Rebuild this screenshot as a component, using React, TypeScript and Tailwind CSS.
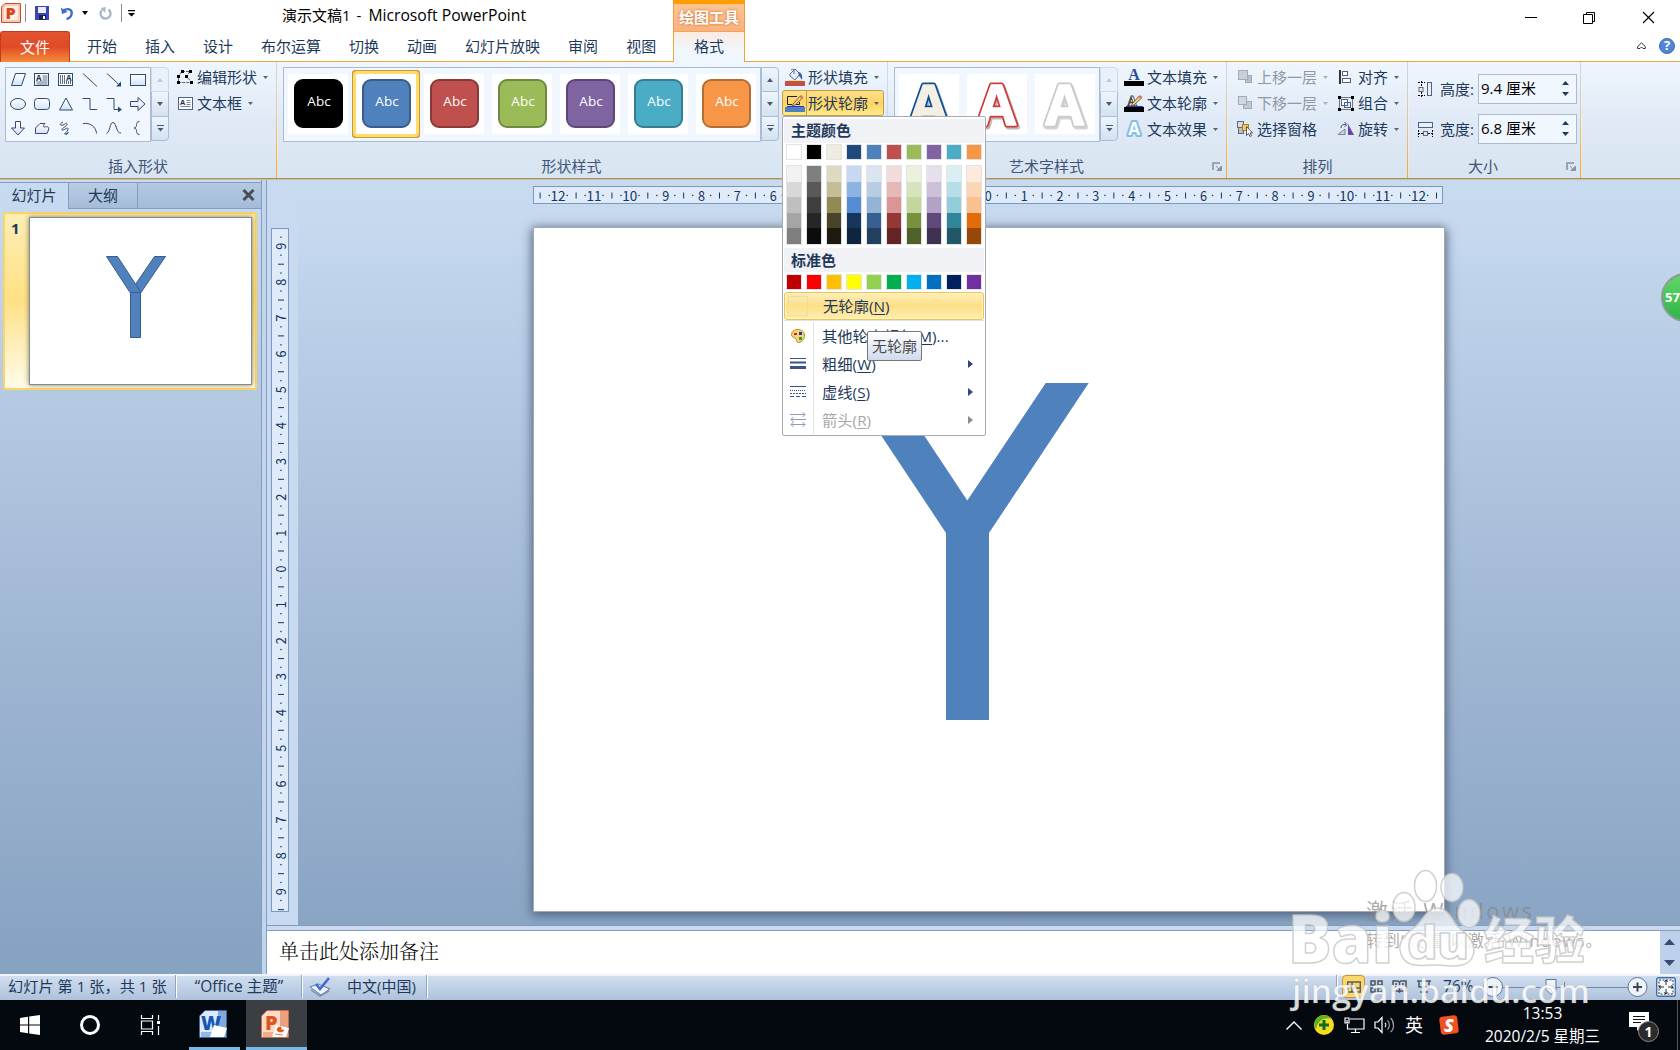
import React from 'react';

const tabs = ['开始', '插入', '设计', '布尔运算', '切换', '动画', '幻灯片放映', '审阅', '视图'];

const shapeStyles = [
  { fill: '#000000', line: '#000000' },
  { fill: '#4f81bd', line: '#385d8a', active: true },
  { fill: '#c0504d', line: '#8c3836' },
  { fill: '#9bbb59', line: '#71893f' },
  { fill: '#8064a2', line: '#5c4776' },
  { fill: '#4bacc6', line: '#357d91' },
  { fill: '#f79646', line: '#b66d31' },
];

const themeColors = ['#ffffff', '#000000', '#eeece1', '#1f497d', '#4f81bd', '#c0504d', '#9bbb59', '#8064a2', '#4bacc6', '#f79646'];

const themeShades = [
  ['#f2f2f2', '#d8d8d8', '#bfbfbf', '#a5a5a5', '#7f7f7f'],
  ['#7f7f7f', '#595959', '#3f3f3f', '#262626', '#0c0c0c'],
  ['#ddd9c3', '#c4bd97', '#938953', '#494429', '#1d1b10'],
  ['#c6d9f0', '#8db3e2', '#548dd4', '#17365d', '#0f243e'],
  ['#dbe5f1', '#b8cce4', '#95b3d7', '#366092', '#244061'],
  ['#f2dcdb', '#e5b9b7', '#d99694', '#953734', '#632423'],
  ['#ebf1dd', '#d7e3bc', '#c3d69b', '#76923c', '#4f6128'],
  ['#e5e0ec', '#ccc1d9', '#b2a2c7', '#5f497a', '#3f3151'],
  ['#dbeef3', '#b7dde8', '#92cddc', '#31859b', '#205867'],
  ['#fdeada', '#fbd5b5', '#fac08f', '#e36c09', '#974806'],
];

const standardColors = ['#c00000', '#ff0000', '#ffc000', '#ffff00', '#92d050', '#00b050', '#00b0f0', '#0070c0', '#002060', '#7030a0'];

const Caret = ({ faded = false }: { faded?: boolean }) => (
  <svg width="5" height="3" viewBox="0 0 5 3" className="shrink-0">
    <path d="M0 0h5L2.5 3z" fill={faded ? '#a9b3c0' : '#5a6472'} />
  </svg>
);

const GalleryScroll = ({ topFaded = false }: { topFaded?: boolean }) => (
  <div className="flex h-[74px] w-[18px] shrink-0 flex-col text-[#4f5b6b]">
    <div
      className={
        topFaded
          ? 'flex flex-1 items-center justify-center rounded-tr border border-[#cbdaeb] bg-[#e9f2fb] text-[#bccbdd]'
          : 'flex flex-1 items-center justify-center rounded-tr border border-[#aabbd3] bg-linear-to-b from-[#eef5fd] to-[#d9e6f4]'
      }
    >
      <svg width="6" height="4" viewBox="0 0 6 4"><path d="M0 4h6L3 0z" fill="currentColor" /></svg>
    </div>
    <div className="flex flex-1 items-center justify-center border-x border-[#aabbd3] bg-linear-to-b from-[#eef5fd] to-[#d3e1f1]">
      <svg width="6" height="4" viewBox="0 0 6 4"><path d="M0 0h6L3 4z" fill="currentColor" /></svg>
    </div>
    <div className="flex flex-1 items-center justify-center rounded-br border border-[#aabbd3] bg-linear-to-b from-[#eef5fd] to-[#d3e1f1]">
      <svg width="7" height="7" viewBox="0 0 7 7"><path d="M0 0h7v1H0zM.5 3h6L3.5 6.5z" fill="currentColor" /></svg>
    </div>
  </div>
);

const DialogLauncher = () => (
  <svg width="10" height="9" viewBox="0 0 10 9" fill="none" stroke="#8793a3">
    <path d="M1 8V1h7" strokeWidth="1.600" />
    <path d="M4 4l3 3" />
    <path d="M5 8.500h4.500V4z" fill="#8793a3" />
  </svg>
);

type GroupProps = { width: string; label: string; labelPad?: string; launcher?: boolean; line?: string; children: React.ReactNode };

const Group = ({ width, label, labelPad = '', launcher, line, children }: GroupProps) => (
  <div className={`flex shrink-0 flex-col ${width}`}>
    <div className="flex min-h-0 flex-1">
      <div className="flex min-w-0 flex-1 flex-col">
        <div className="flex h-[91px] pt-0.5">{children}</div>
        <div className="flex h-[25px] items-center justify-center pt-px text-[#3f5577]">
          <span className={`flex-1 text-center ${labelPad}`}>{label}</span>
          {launcher && <span className="mr-[4px]"><DialogLauncher /></span>}
        </div>
      </div>
      <div className={line ?? 'w-0.5 border-r border-white/70 bg-linear-to-b from-[#cbd9e8] via-[#dcc9a0] to-[#f0a82f]'} />
    </div>
  </div>
);

// small drawing glyphs of the shape gallery
const shapeGlyphs: React.ReactNode[] = [
  <path d="M5.500 1.500h10l-4 12h-10z" fill="url(#gl)" />,
  <g><rect x=".5" y="1.500" width="14" height="12" fill="#fff" /><path d="M8.500 4h5M8.500 6h5M8.500 8h5M2.500 10h11M2.500 12h11" strokeWidth=".8" /><text x="2" y="8.500" fontSize="8" fontWeight="700" stroke="none" fill="#1f2f4d">A</text></g>,
  <g><rect x=".5" y="1.500" width="14" height="12" fill="#fff" /><path d="M2.500 3v9M4.500 3v9M6.500 3v9M8.500 9v3M10.500 9v3M12.500 9v3" strokeWidth=".8" /><text x="8" y="8.500" fontSize="8" fontWeight="700" stroke="none" fill="#1f2f4d">A</text></g>,
  <path d="M1 1.500l14 13" />,
  <g><path d="M1 1.500l13 12" /><path d="M15 14.500v-5l-5 5z" fill="#2b4a78" stroke="none" /></g>,
  <rect x=".5" y="2.500" width="15" height="11" fill="url(#gl)" />,
  <ellipse cx="8" cy="8" rx="7.500" ry="5.500" fill="url(#gl)" />,
  <rect x=".5" y="2.500" width="15" height="11" rx="3" fill="url(#gl)" />,
  <path d="M8 2l6.500 12h-13z" fill="url(#gl)" />,
  <path d="M.5 2.500H8v11h7" />,
  <g><path d="M.5 2.500H8v11h5" /><path d="M12 10.500l4 3-4 3z" fill="#2b4a78" stroke="none" /></g>,
  <path d="M.5 5.500H8v-4L15 8l-7 6.500v-4H.500z" fill="url(#gl)" />,
  <path d="M5.500 1.500h5V8h4L8 15 1.500 8h4z" fill="url(#gl)" />,
  <path d="M1.500 13.500V8L6 3.500h5C9 5.500 9 7 10.500 7c3-1 5 0 4 3L13 13.500z" fill="url(#gl)" />,
  <path d="M5 2c-4 2-3 4 0 3s3-3 4-1-7 5-5 6 6-4 6-1-5 5-3 5 4-3 3-1l-2 2" />,
  <path d="M1 3.500c7-1 13 3 13.500 10" />,
  <path d="M.5 13.500c4-2 3-11 6.500-11s3 11 8 10.500" />,
  <path d="M9.500 1.500c-5 0-1 6-5.500 6.500 4.500.5.500 6.500 5.500 6.500" />,
];

const ShapeGallery = () => (
  <div className="flex h-[75px] w-[164px]">
    <div className="grid h-[75px] w-[146px] shrink-0 grid-cols-[23px_25px_24px_24px_24px_24px] grid-rows-[24px_24px_24px] border border-[#aabbd3] bg-[#f0f7fe]">
      {shapeGlyphs.map((g, i) => (
        <div key={i} className="flex items-center justify-center">
          <svg width="16" height="16" viewBox="0 0 16 16" fill="none" stroke="#2f4a73">
            <defs>
              <linearGradient id="gl" x1="0" y1="0" x2="0" y2="1"><stop stopColor="#fff" /><stop offset="1" stopColor="#d3e3f5" /></linearGradient>
            </defs>
            {g}
          </svg>
        </div>
      ))}
    </div>
    <GalleryScroll topFaded />
  </div>
);

const IconEditShape = () => (
  <svg width="16" height="14" viewBox="0 0 16 14"><path d="M5 1.500L1.500 6v6.500h12M5 1.500h8L9.500 6.500l5 5.500" fill="none" stroke="#3f62a0" strokeDasharray="3 1" /><path d="M4 0h3v3H4zM12 0h3v3h-3zM0 5h3v3H0zM8 5h3v3H8zM0 11h3v3H0zM13 11h3v3h-3z" /></svg>
);
const IconTextBox = () => (
  <svg width="15" height="13" viewBox="0 0 15 13" fill="none" stroke="#4c6387"><rect x=".5" y=".5" width="14" height="12" fill="#fff" /><path d="M8.500 3.500h4M8.500 5.500h4M8.500 7.500h4M2.500 9.500h10" strokeWidth=".8" /><text x="2" y="7.500" fontSize="7.500" fontWeight="700" stroke="none" fill="#1f2f4d">A</text></svg>
);
const IconFill = () => (
  <svg width="20" height="18" viewBox="0 0 20 18"><path d="M0 13h20v5H0z" fill="#c0504d" /><path d="M3 12h14v1H3z" fill="#f5e36b" /><path d="M5 6l5-5 5 5-5 6-5-4z" fill="#e7eef8" stroke="#5b6f91" /><path d="M9 6V2a2 2 0 0 0-3 0" fill="none" stroke="#5b6f91" /><path d="M13 4c3 0 5 3 4 8-1-2-2-3-3-4z" fill="#2f5fb3" /></svg>
);
const Pencil = () => (
  <g><path d="M8 10l7-8 2.500 2L10 11l-3 1z" fill="#f4cf7b" stroke="#5d4a2d" strokeWidth=".8" /><path d="M14 3l2-2 2.500 2L17 5z" fill="#d9776b" /></g>
);
const IconOutline = () => (
  <svg width="20" height="18" viewBox="0 0 20 18"><path d="M0 13h20v5H0z" fill="#4f81bd" /><path d="M2 12.500h17" stroke="#2531e0" /><path d="M12 2.500H2.500v8H7M14.500 8v2.500H11" fill="none" stroke="#222" /><Pencil /></svg>
);
const IconTextFill = () => (
  <svg width="20" height="18" viewBox="0 0 20 18"><path d="M0 13h20v5H0z" /><text x="10" y="12" textAnchor="middle" fontSize="16" fontWeight="700" fontFamily="Liberation Serif" fill="#2b4a94">A</text></svg>
);
const IconTextOutline = () => (
  <svg width="20" height="18" viewBox="0 0 20 18"><path d="M0 13h20v5H0z" /><path d="M2 12.500h17" stroke="#2531e0" /><text x="8" y="11.500" textAnchor="middle" fontSize="14" fontWeight="700" fontFamily="Liberation Serif" fill="#fff" stroke="#444" strokeWidth=".8">A</text><Pencil /></svg>
);
const IconTextEffect = () => (
  <svg width="20" height="18" viewBox="0 0 20 18"><text x="10" y="15" textAnchor="middle" fontSize="17" fontWeight="700" fontFamily="Open Sans" fill="#fff" stroke="#7fc0e2" strokeWidth="4" strokeLinejoin="round" paintOrder="stroke">A</text></svg>
);
const IconLayer = ({ back = false }: { back?: boolean }) => (
  <svg width="15" height="14" viewBox="0 0 15 14" stroke="#a2abb8">
    {back ? <><rect x="5.500" y="5.500" width="8" height="7" fill="#c3c9d2" /><rect x=".5" y=".5" width="8" height="8" fill="#d3d8e0" /></> : <><rect x="7.500" y="5.500" width="6" height="7" fill="#b7bec9" /><rect x=".5" y=".5" width="9" height="9" fill="#c9cfd9" /></>}
  </svg>
);
const IconSelectPane = () => (
  <svg width="16" height="16" viewBox="0 0 16 16"><rect x=".5" y=".5" width="6" height="6" fill="#d7dbe2" stroke="#667" /><rect x="1.500" y="6.500" width="5" height="6" fill="#b9bfc9" stroke="#667" /><rect x="5.500" y="3.500" width="6" height="6" fill="#f7c765" stroke="#a8802c" /><path d="M9.500 5.500v9l2-2 1.500 3 1.500-.8-1.500-2.700h2.500z" fill="#fff" stroke="#333" strokeWidth=".8" /></svg>
);
const IconAlign = () => (
  <svg width="13" height="14" viewBox="0 0 13 14"><path d="M1 0v14" stroke="#000" strokeWidth="1.600" /><rect x="3.500" y="1.500" width="5" height="4" fill="#fff" stroke="#4c6387" /><rect x="3.500" y="8.500" width="8" height="4" fill="#fff" stroke="#4c6387" /></svg>
);
const IconGroupObjects = () => (
  <svg width="16" height="15" viewBox="0 0 16 15"><path d="M1.500 1.500h13v12h-13z" fill="none" stroke="#000" strokeDasharray="1 1" /><rect x="3.500" y="3.500" width="6" height="6" fill="#fff" stroke="#4c6387" /><rect x="6.500" y="6.500" width="6" height="5" fill="none" stroke="#4c6387" /><path d="M0 0h3v3H0zM13 0h3v3h-3zM0 12h3v3H0zM13 12h3v3h-3z" /></svg>
);
const IconRotate = () => (
  <svg width="16" height="14" viewBox="0 0 16 14"><path d="M0 12.500L7 7v5.500z" fill="#cdd6e2" stroke="#76859c" /><path d="M10 2v11h6z" fill="#6a45a5" /><path d="M3 6c0-3 2-4 5-3.500M6.500 0L9 2.500 6.500 5" fill="none" stroke="#36507d" /></svg>
);

type CmdProps = { icon: React.ReactNode; text: string; iconBox?: string; caret?: boolean; disabled?: boolean };

const Cmd = ({ icon, text, iconBox = 'w-5', caret = true, disabled }: CmdProps) => (
  <div className={disabled ? 'flex h-[26px] items-center text-[#8d98a8]' : 'flex h-[26px] items-center'}>
    <span className={`mr-[3px] flex shrink-0 justify-center ${iconBox}`}>{icon}</span>
    <span className="mr-1.5 shrink-0">{text}</span>
    {caret && <Caret faded={disabled} />}
  </div>
);

const ShapeStyleGallery = () => (
  <div className="flex h-[75px] w-[496px]">
    <div className="flex h-[75px] flex-1 items-center gap-2 border border-[#aabbd3] bg-[#f0f7fe] pb-0.5 pl-1">
      {shapeStyles.map((s) => (
        <div
          key={s.fill}
          className={
            s.active
              ? 'flex size-[60px] shrink-0 items-center justify-center rounded-[1px] bg-white outline-3 outline-[#fddc6c] ring-4 ring-[#c9983c]'
              : 'flex size-[60px] shrink-0 items-center justify-center bg-white'
          }
        >
          <div
            className="flex size-[49px] items-center justify-center rounded-[9px] border-2 pb-1 pl-0.5 text-[13.500px] text-white"
            style={{ backgroundColor: s.fill, borderColor: s.line }}
          >
            Abc
          </div>
        </div>
      ))}
    </div>
    <GalleryScroll />
  </div>
);

const WordArt = ({ fill, stroke, shadow }: { fill: string; stroke: string; shadow: string }) => (
  <div className="size-[60px] shrink-0 bg-white">
    <svg width="60" height="60" viewBox="0 0 60 60">
      <g fontFamily="Open Sans" fontWeight="700" fontSize="56" textAnchor="middle" strokeLinejoin="round">
        <text x="31" y="52.500" fill={shadow} stroke={shadow} strokeWidth="5" opacity=".4">A</text>
        <text x="29.500" y="51" fill={fill} stroke={stroke} strokeWidth="5" paintOrder="stroke">A</text>
        <text x="29.500" y="51" fill={fill} stroke={fill} strokeWidth="1.500">A</text>
      </g>
    </svg>
  </div>
);

const SizeField = ({ icon, label, value }: { icon: React.ReactNode; label: string; value: string }) => (
  <div className="flex h-[30px] items-center">
    <span className="mr-2 w-[14px]">{icon}</span>
    <span className="w-[38px]">{label}</span>
    <div className="flex h-[30px] w-[99px] items-center justify-between border border-[#aabbd3] bg-[#f0f7fe] pr-[7px] pb-0.5 pl-0.5 text-black">
      <span>{value}</span>
      <svg width="7" height="16" viewBox="0 0 7 16" fill="#1e395b"><path d="M0 5h7L3.500 1zM0 12h7l-3.500 4z" /></svg>
    </div>
  </div>
);

const Ribbon = () => (
  <div className="flex h-[116px] bg-linear-to-b from-[#eff6fd] via-[#e0eaf6] to-[#d8e4f1]">
    <Group width="w-[278px]" label="插入形状">
      <div className="pt-[3px] pl-[5px]"><ShapeGallery /></div>
      <div className="pl-[7px]">
        <Cmd icon={<IconEditShape />} text="编辑形状" iconBox="w-[18px]" />
        <Cmd icon={<IconTextBox />} text="文本框" iconBox="w-[18px]" />
      </div>
    </Group>
    <Group width="w-[610px]" label="形状样式" labelPad="pr-[22px]" line="w-px bg-[#cbd9e8]">
      <div className="pt-[3px] pl-[5px]"><ShapeStyleGallery /></div>
      <div className="pl-[3px]">
        <div className="px-[3px]"><Cmd icon={<IconFill />} text="形状填充" /></div>
        <div className="flex h-[26px] w-[102px] rounded-[3px] border border-[#c29b4a] bg-linear-to-b from-[#fde08a] via-[#fdd363] to-[#feeb8c]">
          <span className="flex w-[24px] items-center justify-center border-r border-[#c29b4a]"><IconOutline /></span>
          <span className="mr-1.5 shrink-0 self-center pl-px">形状轮廓</span>
          <span className="flex items-center"><Caret /></span>
        </div>
      </div>
    </Group>
    <Group width="w-[340px]" label="艺术字样式" labelPad="pr-[7px]" launcher>
      <div className="flex pt-[3px] pl-[6px]">
        <div className="flex h-[75px] w-[206px] items-center gap-2 border border-[#aabbd3] bg-[#f0f7fe] pb-0.5 pl-1">
          <WordArt fill="#f3efe2" stroke="#0f4c96" shadow="#555" />
          <WordArt fill="#ffffff" stroke="#d23a38" shadow="#555" />
          <WordArt fill="#ffffff" stroke="#c9c9c9" shadow="#999" />
        </div>
        <GalleryScroll topFaded />
      </div>
      <div className="pl-1.5">
        <Cmd icon={<IconTextFill />} text="文本填充" />
        <Cmd icon={<IconTextOutline />} text="文本轮廓" />
        <Cmd icon={<IconTextEffect />} text="文本效果" />
      </div>
    </Group>
    <Group width="w-[181px]" label="排列">
      <div className="pl-2">
        <Cmd icon={<IconLayer />} text="上移一层" iconBox="w-[18px]" disabled />
        <Cmd icon={<IconLayer back />} text="下移一层" iconBox="w-[18px]" disabled />
        <Cmd icon={<IconSelectPane />} text="选择窗格" iconBox="w-[18px]" caret={false} />
      </div>
      <div className="pl-2">
        <Cmd icon={<IconAlign />} text="对齐" iconBox="w-[19px]" />
        <Cmd icon={<IconGroupObjects />} text="组合" iconBox="w-[19px]" />
        <Cmd icon={<IconRotate />} text="旋转" iconBox="w-[19px]" />
      </div>
    </Group>
    <Group width="w-[173px]" label="大小" labelPad="pr-[9px]" launcher>
      <div className="flex flex-col gap-2.5 pt-2.5 pl-[9px]">
        <SizeField
          label="高度:"
          value="9.4 厘米"
          icon={<svg width="14" height="16" viewBox="0 0 14 16" fill="none"><path d="M0 1.500h7M3.500 0v5M3.500 11v5M0 14.500h7" stroke="#000" strokeDasharray="2 1" /><rect x="1" y="6.500" width="4" height="4" stroke="#667" /><rect x="9.500" y="1.500" width="4" height="13" fill="#e8f0fa" stroke="#4c6387" /></svg>}
        />
        <SizeField
          label="宽度:"
          value="6.8 厘米"
          icon={<svg width="15" height="15" viewBox="0 0 15 15" fill="none"><rect x=".5" y=".5" width="14" height="5" fill="#e8f0fa" stroke="#4c6387" /><path d="M.5 8v7M0 11.500h5M10 11.500h5M14.500 8v7" stroke="#000" strokeDasharray="2 1" /><rect x="5.500" y="9.500" width="4" height="4" stroke="#667" /></svg>}
        />
      </div>
    </Group>
  </div>
);

const TitleBar = () => (
  <div className="flex h-[31px] items-start bg-white text-[15px]">
    <div className="flex h-[26px] w-[282px] items-center pl-px">
      <svg width="20" height="20" viewBox="0 0 20 20"><path d="M4 .5h15.500v19H.500V4z" fill="#f7c9b5" stroke="#cf4a28" /><path d="M5 3h12v14H3V5z" fill="#fdeee6" /><text x="4.500" y="16" fontSize="16" fontWeight="800" fill="#d6461f">P</text></svg>
      <div className="mx-[4px] h-[18px] w-px bg-[#8a8a8a]" />
      <svg width="14" height="14" viewBox="0 0 14 14" className="ml-[5px]"><path d="M0 0h14v14H0z" fill="#3c45b5" /><path d="M3 1h8v6H3z" fill="#e8eefc" /><path d="M4 9h7v5H4z" fill="#1c2350" /><path d="M8 10h2v3H8z" fill="#fff" /></svg>
      <svg width="13" height="14" viewBox="0 0 14 14" className="ml-[12px]" fill="none"><path d="M2 5c5-4 10-2 9.500 2.500S8 13 6 13.500" stroke="#3b6fc9" strokeWidth="2.600" /><path d="M0 1l1 7 6-2z" fill="#3b6fc9" /></svg>
      <svg width="6" height="4" viewBox="0 0 6 4" className="ml-[8px]"><path d="M0 0h6L3 4z" /></svg>
      <svg width="13" height="13" viewBox="0 0 13 13" className="ml-[11px]" fill="none"><path d="M3 3A5 5 0 1 0 9.500 2.500" stroke="#a9b7cb" strokeWidth="2.400" /><path d="M6.500 0v6L1.500 1z" fill="#a9b7cb" /></svg>
      <div className="mr-[6px] ml-[9px] h-[18px] w-px bg-[#8a8a8a]" />
      <svg width="7" height="7" viewBox="0 0 7 7"><path d="M0 0h7v1.300H0zM0 3h7L3.500 6.500z" /></svg>
    </div>
    <div className="flex h-[31px] w-[391px] items-center whitespace-pre text-black">
      演示文稿1<span className="mr-[7px] ml-[6px]">-</span><span className="text-[15.700px]">Microsoft PowerPoint</span>
    </div>
    <div className="flex h-[31px] w-[72px] items-center justify-center border-x border-t-4 border-x-[#ef9b47] border-t-[#ff9c00] bg-linear-to-b from-[#fdc592] to-[#fbb27d] font-bold text-white [text-shadow:0_0_3px_#c0602a]">
      绘图工具
    </div>
    <svg width="131" height="14" viewBox="0 0 131 14" className="mt-[11px] mr-[25px] ml-auto" fill="none" stroke="#000"><path d="M1 6.500h12M119 1l11 11M130 1l-11 11" strokeWidth="1.200" /><path d="M59.500 3.500h9v9h-9zM62.500 3.500v-2h8v9h-2" /></svg>
  </div>
);

const TabBar = () => (
  <div className="flex h-[31px] bg-white">
    <div className="flex h-[31px] w-[70px] items-center justify-center rounded-t-[3px] border border-b-0 border-[#c63a1a] bg-linear-to-b from-[#e2532f] via-[#e04a26] to-[#f58b3c] text-white">
      文件
    </div>
    <div className="flex h-[31px] w-[603px] items-center gap-7 border-b border-[#eba53c] pl-[17px]">
      {tabs.map((t) => <span key={t}>{t}</span>)}
    </div>
    <div className="flex w-[72px] items-center justify-center border-x border-t border-x-[#f0a62c] border-t-[#f3a25c] bg-linear-to-b from-[#fcebe0] to-[#eff6fd] to-60% pb-0.5">
      格式
    </div>
    <div className="flex flex-1 items-center justify-end border-b border-[#eba53c] pr-[5px]">
      <svg width="9" height="8" viewBox="0 0 9 8" className="mr-[13px]" fill="none" stroke="#333"><path d="M.7 4.500l3.800-3.700 3.800 3.700v2H6L4.500 5 3 6.500H.700z" /></svg>
      <div className="-mt-px flex size-4 items-center justify-center rounded-full border border-[#3c66b0] bg-[#4f86d8] text-[13px] font-bold text-white">?</div>
    </div>
  </div>
);

const SlidePanel = () => (
  <div className="flex w-[262px] shrink-0 flex-col border-r border-[#839cc0]">
    <div className="mt-0.5 flex h-[27px] border-t border-[#839cc0]">
      <div className="flex w-[69px] items-center justify-center border-r border-[#839cc0] pb-px">幻灯片</div>
      <div className="flex w-[69px] items-center justify-center border-r border-b border-[#839cc0] bg-linear-to-b from-[#b9cde4] to-[#a5bcd8]">大纲</div>
      <div className="flex flex-1 items-center justify-end border-b border-[#839cc0] bg-linear-to-b from-[#b3c8e1] to-[#a5bcd8] pr-[6px] pb-px">
        <svg width="13" height="12" viewBox="0 0 13 12"><path d="M1.500 1l10 10M11.500 1l-10 10" stroke="#474e58" strokeWidth="3" /></svg>
      </div>
    </div>
    <div className="mt-[3px] ml-[3px] flex h-[178px] w-[254px] rounded-[3px] border-2 border-[#fbd465] bg-linear-to-b from-[#fdeeb4] via-[#fee185] to-[#fffbe8]">
      <span className="w-[24px] pt-[7px] pl-[6px] font-bold leading-none">1</span>
      <div className="mt-[3px] h-[168px] w-[223px] border border-[#7f8ba0] bg-white shadow-[0_0_5px_#8a7b45]">
        <svg width="221" height="166" viewBox="30 218 221 166" fill="#4f81bd" stroke="#385d8a">
          <path d="M154.500 256.500h11l-24.500 36h-3l-3-7.500z" />
          <path d="M106.500 256.500h11L141 292.500h-11z" />
          <path d="M130.500 292.500h10v45h-10z" />
        </svg>
      </div>
    </div>
  </div>
);

const RULER_STEP = 35.85;

// Marks for one ruler: numbers every cm, a tall tick at the half and dots at the quarters.
const RulerMarks = ({ half }: { half: number }) => {
  const marks: React.ReactNode[] = [];
  for (let i = -half; i <= half; i++) {
    const at = i * RULER_STEP;
    marks.push(
      <text key={`n${i}`} x={at} y="5" textAnchor="middle" fontSize="14" fontFamily="Noto Sans CJK SC" textLength={Math.abs(i) > 9 ? 15 : 7} lengthAdjust="spacingAndGlyphs">{Math.abs(i)}</text>,
      <rect key={`a${i}`} x={at - 9.500} y="-.7" width="1.300" height="1.300" />,
      <rect key={`b${i}`} x={at + 8.500} y="-.7" width="1.300" height="1.300" />,
      <rect key={`t${i}`} x={at + 17.500} y="-3" width="1" height="6" />,
    );
  }
  marks.push(<rect key="first" x={-half * RULER_STEP - 18.500} y="-3" width="1" height="6" />);
  return <g fill="#15355f">{marks}</g>;
};

const SlideEditor = () => (
  <div className="flex h-[746px] border-b border-[#839cc0]">
    <div className="flex w-[31px] flex-col bg-[#c8daef] pt-[48px] pl-[4px]">
      <svg width="18" height="684" viewBox="0 0 16 682" className="border border-[#7d98c0] bg-[#dfebf8]">
        <g transform="translate(9 340) rotate(-90)"><RulerMarks half={9} /></g>
      </svg>
    </div>
    <div className="flex-1 bg-linear-to-b from-[#c8daef] to-transparent to-12% pt-[6px] pl-[235px]">
      <svg width="910" height="18" viewBox="0 0 908 16" className="border border-[#7d98c0] bg-[#dfebf8]">
        <g transform="translate(454.300 8.500)"><RulerMarks half={12} /></g>
      </svg>
      <div className="mt-[23px] h-[685px] w-[912px] border border-[#a3a9b1] bg-white shadow-[0_2px_10px_1px_#4d617d]">
        <svg width="910" height="683" viewBox="534 228 910 683">
          <path d="M846.300 383h43l78 117.600L1045.700 383h43L989 533v187h-43V533z" fill="#4f81bd" />
        </svg>
      </div>
    </div>
  </div>
);

const Notes = () => (
  <div className="flex h-[43px] bg-white">
    <div className="flex flex-1 items-center pb-0.5 pl-[12px] font-['Liberation_Serif','Noto_Serif_CJK_SC','Noto_Sans_CJK_SC',serif] text-[20px] font-light text-black">
      单击此处添加备注
    </div>
    <div className="flex w-5 flex-col items-center justify-between bg-[#bed1ea] py-[8px] pr-px">
      <svg width="11" height="6" viewBox="0 0 11 6"><path d="M0 6h11L5.500 0z" fill="#3a4a77" /></svg>
      <svg width="11" height="6" viewBox="0 0 11 6"><path d="M0 0h11L5.500 6z" fill="#3a4a77" /></svg>
    </div>
  </div>
);

const StatusSep = () => <div className="h-[23px] w-0.5 border-r border-white bg-[#8fa5c3]" />;

const StatusBar = () => (
  <div className="flex h-[26px] items-center border-t-2 border-t-[#eef4fb] bg-linear-to-b from-[#d0deef] to-[#aec2dc] pb-[3px]">
    <span className="w-[175px] pl-[8px] text-[15.200px] whitespace-nowrap">幻灯片 第 1 张，共 1 张</span>
    <StatusSep />
    <span className="w-[124px] text-center text-[15.500px] whitespace-nowrap">“Office 主题”</span>
    <StatusSep />
    <svg width="22" height="20" viewBox="0 0 22 20" className="ml-[6px]"><path d="M1 10l8-3 12 5-9 6z" fill="#eef3fa" stroke="#5577b5" /><path d="M2 13l9 6 9-5" fill="none" stroke="#7f8fae" strokeWidth="1.500" /><path d="M7 7l4 5L20 1" fill="none" stroke="#4467cf" strokeWidth="2.500" /></svg>
    <span className="ml-4 w-[79px] whitespace-nowrap">中文(中国)</span>
    <StatusSep />
    <div className="flex-1" />
    <StatusSep />
    <div className="ml-1 flex h-[23px] w-[23px] items-center justify-center rounded-sm border border-[#c2933a] bg-[#fdd768]">
      <svg width="14" height="12" viewBox="0 0 14 12" fill="none" stroke="#555f6e" strokeWidth="1.500"><path d="M.7 1h12.600v10H.700zM5 1v10M5 7h8" /></svg>
    </div>
    <svg width="62" height="13" viewBox="0 0 62 13" className="ml-[5px]" fill="none" stroke="#4c5563" strokeWidth="1.500">
      <path d="M1 1h4v4H1zM8 1h4v4H8zM1 8h4v4H1zM8 8h4v4H8z" />
      <path d="M23 1h5l1.500 1L31 1h5v10h-5l-1.500 1L28 11h-5zM29.500 2v9M25 4h2M25 7h2M32 4h2M32 7h2" />
      <path d="M47 1h14M49 1v6h10V1M54 7v4M50 12h8" />
    </svg>
    <span className="ml-[11px] w-[39px] text-[15.500px]">76%</span>
    <svg width="166" height="22" viewBox="0 0 166 22" fill="none" stroke="#5f7699">
      <path d="M21 11.500h125M82.500 6v9" stroke="#7189ad" />
      <circle cx="11" cy="11" r="9.500" fill="#eef3fa" /><circle cx="155.500" cy="11" r="9.500" fill="#eef3fa" />
      <path d="M6.500 11h9M151 11h9M155.500 6.500v9" stroke="#3c4858" strokeWidth="2" />
      <path d="M64 3.500h10v10l-5 5-5-5z" fill="#eef3fa" />
    </svg>
    <svg width="20" height="20" viewBox="0 0 20 20" className="mr-[4px] ml-[8px]"><rect x=".7" y=".7" width="18.600" height="18.600" rx="2" fill="#f4f7fb" stroke="#3f6fae" strokeWidth="1.400" /><path d="M10 3v5M10 12v5M3 10h5M12 10h5M8.500 5L10 3l1.500 2M8.500 15l1.500 2 1.500-2M5 8.500L3 10l2 1.500M15 8.500l2 1.500-2 1.500" fill="none" stroke="#333" /><path d="M3 3h14v14H3z" fill="none" stroke="#333" strokeDasharray="2 1.500" /></svg>
  </div>
);

const OfficeIcon = ({ letter, main, pale }: { letter: string; main: string; pale: string }) => (
  <svg width="28" height="28" viewBox="0 0 28 28">
    <path d="M6 .5h21.500v27H.500V6z" fill={pale} stroke={main} strokeOpacity=".5" />
    <path d="M19 1h8v26H19z" fill={main} opacity=".45" />
    <path d="M2 22h20v5H2z" fill={main} opacity=".35" />
    <text x={letter === 'W' ? 2 : 4} y="20" fontSize="20" fontWeight="800" fill={main} fontFamily="Open Sans" textLength={letter === 'W' ? 20 : undefined} lengthAdjust="spacingAndGlyphs">{letter}</text>
    <path d="M15 15l13 3-3 9H11z" fill="#fff" />
    {letter === 'P' && <path d="M20 17a3.500 2.500 0 1 0 3 3h-3zM14 24l8 1" fill={main} stroke={main} strokeWidth=".8" />}
  </svg>
);

const TaskBar = () => (
  <div className="flex h-[50px] bg-[#04080f] text-white">
    <div className="flex w-[189px] items-center pl-5">
      <svg width="20" height="20" viewBox="0 0 20 20" fill="#fff"><path d="M0 3l8-1.200V9.500H0zM9.200 1.600L20 0v9.500H9.200zM0 10.600h8v7.600L0 17zM9.200 10.600H20V20L9.200 18.400z" /></svg>
      <div className="ml-10 size-5 rounded-full border-3 border-white" />
      <svg width="21" height="20" viewBox="0 0 21 20" className="ml-[40px]" fill="none" stroke="#fff" strokeWidth="1.200"><path d="M1.500 0v3.500h11V0M1.500 6h11v8h-11zM1.500 20v-3.500h11V20M18.500 0v5M18.500 11v9" /><path d="M17 6h3v3h-3z" fill="#fff" stroke="none" /></svg>
    </div>
    <div className="flex w-[51px] items-start border-b-3 border-[#76b9ed] pt-2.5 pl-2.5"><OfficeIcon letter="W" main="#1457b8" pale="#dcebfb" /></div>
    <div className="ml-1.5 flex w-[61px] items-start border-b-3 border-[#76b9ed] bg-[#3b3e43] pt-2.5 pl-[15px]"><OfficeIcon letter="P" main="#dd5622" pale="#fcdcc8" /></div>
    <div className="flex-1" />
    <div className="flex items-center">
      <svg width="16" height="9" viewBox="0 0 16 9" fill="none" stroke="#fff" strokeWidth="1.400"><path d="M.5 8.500L8 1l7.500 7.500" /></svg>
      <svg width="20" height="20" viewBox="0 0 20 20" className="ml-[12px]"><circle cx="10" cy="10" r="10" fill="#f7dc1d" /><path d="M1 6A10 10 0 0 1 18 4c-6-2-14 0-16 10-2-3-2-6-1-8z" fill="#57b52b" /><path d="M10 5v10M5 10h10" stroke="#0d6b25" strokeWidth="3" /></svg>
      <svg width="21" height="17" viewBox="0 0 21 17" className="ml-[10px]" fill="none" stroke="#fff" strokeWidth="1.200"><path d="M6 2h14v10H3.500V7M1 1h4v5H1zM3 3v3M11.500 12v3M7 15.500h9" /></svg>
      <svg width="21" height="18" viewBox="0 0 21 18" className="ml-[9px]" fill="none" stroke="#fff" strokeWidth="1.200"><path d="M1 6h3l4-4.500v15L4 12H1zM11 7c1 1 1 3 0 4" /><path d="M13.500 4.500c2.500 2 2.500 7 0 9M16.500 2c4 3.500 4 11 0 14" opacity=".6" /></svg>
      <span className="ml-[10px] text-[18px]">英</span>
      <svg width="20" height="20" viewBox="0 0 20 20" className="ml-[16px]"><rect x="1" y="1" width="18" height="18" rx="3" fill="#f1501f" transform="rotate(-7 10 10)" /><text x="10" y="16.500" textAnchor="middle" fontSize="18" fontWeight="800" fontStyle="italic" fill="#fff" fontFamily="Open Sans">S</text></svg>
    </div>
    <div className="ml-[25px] flex w-[117px] flex-col items-center justify-center gap-[7px] text-[15.500px] leading-none whitespace-nowrap">
      <span>13:53</span>
      <span>2020/2/5 星期三</span>
    </div>
    <div className="flex w-[76px] items-center pt-1 pl-[27px]">
      <svg width="32" height="32" viewBox="0 0 32 32"><path d="M1 1h20v15h-8l-4 4v-4H1z" fill="#fff" /><path d="M5 5.500h12M5 8.500h12M5 11.500h8" stroke="#111" /><circle cx="20.500" cy="20.500" r="10" fill="#2b2b2b" stroke="#8a8a8a" /><text x="20.500" y="25.500" textAnchor="middle" fontSize="14" fontWeight="700" fill="#fff">1</text></svg>
    </div>
    <div className="w-[3px] border-l border-[#555a61]" />
  </div>
);

const MenuRow = ({ icon, text, hot, tail = '', arrow, disabled }: { icon: React.ReactNode; text: string; hot: string; tail?: string; arrow?: boolean; disabled?: boolean }) => (
  <div className={disabled ? 'flex h-7 items-center text-[#a7a7a7]' : 'flex h-7 items-center'}>
    <span className="mr-2 flex h-7 w-[30px] items-center justify-center border-r border-[#e2e4e7] pr-[2px] pb-px">{icon}</span>
    <span className="flex-1 pt-px text-[15.300px] whitespace-nowrap">{text}(<span className="underline underline-offset-2">{hot}</span>){tail}</span>
    {arrow && <svg width="5" height="8" viewBox="0 0 5 8" className="mr-[11px]"><path d="M0 0l5 4-5 4z" fill={disabled ? '#8b8b8b' : '#32457c'} /></svg>}
  </div>
);

const OutlineMenu = () => (
  <div className="absolute top-[116px] left-[782px] w-[204px] rounded-[2px] border border-[#a7abb0] bg-white px-px pt-0.5 pb-px">
    <div className="flex h-6 items-center bg-[#f0f2f6] pb-0.5 pl-[7px] font-bold">主题颜色</div>
    <div className="flex gap-1 pt-[1px] pl-0.5">
      {themeColors.map((c) => <div key={c} className="size-4 border border-[#e2e4e7]" style={{ backgroundColor: c }} />)}
    </div>
    <div className="mt-[5px] flex gap-1 pl-0.5">
      {themeShades.map((col, i) => (
        <div key={i} className="flex h-20 w-4 flex-col border border-[#e2e4e7]">
          {col.map((c) => <div key={c} className="flex-1" style={{ backgroundColor: c }} />)}
        </div>
      ))}
    </div>
    <div className="mt-[3px] flex h-6 items-center bg-[#f0f2f6] pl-[7px] font-bold">标准色</div>
    <div className="flex gap-1 pt-0.5 pl-0.5">
      {standardColors.map((c) => <div key={c} className="size-4 border border-[#e2e4e7]" style={{ backgroundColor: c }} />)}
    </div>
    <div className="mt-0.5 flex h-7 items-center rounded-[3px] border border-[#efc54c] bg-linear-to-b from-[#fdeeb9] via-[#fddf86] to-[#fdeeb0] pl-[3px] ring-1 ring-[#fdf3c8] ring-inset">
      <span className="mr-[15px] h-5 w-5 border border-[#ecdca6]" />
      <span className="pt-px text-[15.300px]">无轮廓(<span className="underline underline-offset-2">N</span>)</span>
    </div>
    <div className="border-t border-[#dfe2e6] pt-px">
      <MenuRow
        text="其他轮廓颜色"
        hot="M"
        tail="..."
        icon={<svg width="14" height="14" viewBox="0 0 14 14"><path d="M6 .5c5-.5 8 3 7.500 7S9 14 7 13.500 6 10 4 9 .500 8 .500 5.500 2.500 1 6 .500z" fill="#f7d774" stroke="#b98a2a" /><path d="M3 4h3v2H3z" fill="#d22" /><path d="M8 3h3v3H8z" fill="#23b" /><path d="M8 8h3v3H8z" fill="#2a2" /></svg>}
      />
      <MenuRow text="粗细" hot="W" arrow icon={<svg width="16" height="12" viewBox="0 0 16 12" fill="#3a5488"><path d="M0 0h16v1H0zM0 3.500h16v2H0zM0 8h16v3H0z" /></svg>} />
      <MenuRow text="虚线" hot="S" arrow icon={<svg width="16" height="12" viewBox="0 0 16 12" stroke="#3a5488"><path d="M0 .5h16" /><path d="M0 4.500h16" strokeDasharray="1 1" /><path d="M0 7.500h16" strokeDasharray="2 1" /><path d="M0 10.500h16" strokeDasharray="4 2" /></svg>} />
      <MenuRow text="箭头" hot="R" arrow disabled icon={<svg width="16" height="15" viewBox="0 0 16 15" fill="none" stroke="#8c9cb8"><path d="M0 2.500h15M12.500 0L15 2.500 12.500 5M16 7.500H1M3.500 5L1 7.500 3.500 10M1 12.500h14M3.500 10L1 12.500 3.500 15M12.500 10l2.500 2.500-2.500 2.500" /></svg>} />
    </div>
    <div className="absolute top-[214px] left-[84px] flex h-[30px] w-[55px] items-center justify-center rounded-[2px] border border-[#767676] bg-linear-to-b from-white to-[#cfdbee] text-[#4c4c4c]">
      无轮廓
    </div>
  </div>
);

const Watermark = () => (
  <svg className="pointer-events-none absolute top-[860px] left-[1280px]" width="340" height="160" viewBox="1280 860 340 160">
    <g fill="#8a8480" fillOpacity=".7" fontFamily="Open Sans, Noto Sans CJK SC">
      <text x="1366" y="919" fontSize="22" textLength="166">激活 Windows</text>
      <text x="1366" y="947" fontSize="16.500" textLength="236">转到“设置”以激活 Windows。</text>
    </g>
    <g fill="#fff" fillOpacity=".72" stroke="#c4c4c4" strokeOpacity=".8" strokeWidth="1.500">
      <ellipse cx="1404" cy="907" rx="11" ry="14.500" />
      <ellipse cx="1425.500" cy="886" rx="11" ry="15.500" />
      <ellipse cx="1452" cy="887.500" rx="11" ry="14" />
      <ellipse cx="1469" cy="913.500" rx="11" ry="14" />
      <path d="M1437 908c-10 0-14 12-22 19-12 9-18 16-14 27 4 13 17 12 34 11 12-.5 17 3 27 0 12-3 15-15 9-25-3-6-11-10-16-17-4-7-9-15-18-15z" />
    </g>
    <g fill="#fff" fillOpacity=".72" stroke="#c4c4c4" strokeOpacity=".8" strokeWidth="1.500" strokeLinejoin="round" fontFamily="Open Sans, Noto Sans CJK SC" fontWeight="800">
      <text x="1288" y="963" fontSize="67" textLength="105" lengthAdjust="spacingAndGlyphs">Bai</text>
      <text x="1407" y="959" fontSize="46" textLength="62" lengthAdjust="spacingAndGlyphs">du</text>
      <text x="1484" y="959" fontSize="50" textLength="101" fontWeight="900" fontFamily="Noto Sans CJK SC">经验</text>
    </g>
    <text x="1292" y="1003" fontSize="33" fontWeight="600" fontFamily="Open Sans" fill="#fff" fillOpacity=".85" stroke="#a5a5a5" strokeOpacity=".5" strokeWidth=".6" textLength="298" lengthAdjust="spacingAndGlyphs">jingyan.baidu.com</text>
  </svg>
);

const App = () => {
  return (
    <div className="relative flex h-[1050px] w-[1680px] flex-col overflow-hidden font-['Open_Sans','Noto_Sans_CJK_SC',sans-serif] text-[15px] leading-none text-[#1e395b]">
      <TitleBar />
      <TabBar />
      <Ribbon />
      <div className="h-0.5 shrink-0 border-t border-[#a4926d] bg-[#d0bd93]" />
      <div className="flex h-[794px] shrink-0 bg-linear-to-b from-[#c8dbf1] via-[#a5bbd7] to-[#86a2c1]">
        <SlidePanel />
        <div className="w-[5px] shrink-0 border-r border-[#839cc0] bg-[#c3d5ec]" />
        <div className="flex min-w-0 flex-1 flex-col">
          <SlideEditor />
          <div className="h-[5px] shrink-0 border-b border-[#839cc0] bg-[#c9daf0]" />
          <Notes />
        </div>
      </div>
      <StatusBar />
      <TaskBar />
      <OutlineMenu />
      <div className="absolute top-[273px] left-[1661px] flex size-[49px] items-center rounded-full border-2 border-[#8f9a93] bg-linear-to-b from-[#5fd76a] to-[#2eb34a] pl-[2px] text-[13px] font-bold text-white">
        57
      </div>
      <Watermark />
    </div>
  );
};

export default App;
